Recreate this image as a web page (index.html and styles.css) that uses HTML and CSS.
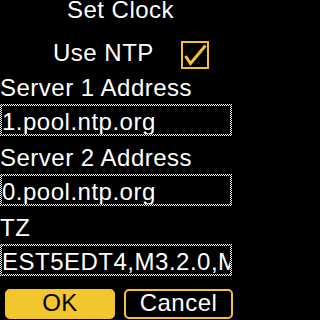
FILE: index.html
```html
<!DOCTYPE html>
<html>
<head>
<meta charset="utf-8">
<link rel="stylesheet" href="styles.css">
</head>
<body>
<div class="screen">
  <div class="title">Set Clock</div>
  <div class="ntp-row">
    <span class="ntp-label">Use NTP</span>
    <svg class="checkbox" width="28" height="28" viewBox="0 0 28 28">
      <rect x="1" y="1" width="26" height="26" fill="none" stroke="#f2c232" stroke-width="2"/>
      <polyline points="4.5,15 9.5,22.5 24.5,4.5" fill="none" stroke="#f2c232" stroke-width="3" stroke-linejoin="miter" stroke-linecap="butt"/>
    </svg>
  </div>
  <div class="group">
    <div class="label">Server 1 Address</div>
    <div class="field"><div class="field-text">1.pool.ntp.org</div></div>
  </div>
  <div class="group">
    <div class="label">Server 2 Address</div>
    <div class="field"><div class="field-text">0.pool.ntp.org</div></div>
  </div>
  <div class="group">
    <div class="label">TZ</div>
    <div class="field"><div class="field-text">EST5EDT4,M3.2.0,M11.1.0</div></div>
  </div>
  <div class="buttons">
    <div class="btn btn-ok">OK</div>
    <div class="btn btn-cancel">Cancel</div>
  </div>
</div>
</body>
</html>
```
FILE: styles.css
```css
html, body {
  margin: 0;
  padding: 0;
  background: #000;
}
body {
  width: 240px;
  height: 320px;
  overflow: hidden;
  font-family: "Liberation Sans", Arial, sans-serif;
  font-size: 24px;
  letter-spacing: 0.5px;
  color: #fff;
}
.screen {
  display: flex;
  flex-direction: column;
  width: 240px;
  height: 320px;
}
.title {
  height: 20px;
  line-height: 20px;
  text-align: center;
  padding-left: 1px;
}
.ntp-row {
  display: flex;
  align-items: flex-start;
  gap: 27px;
  margin-top: 21px;
  padding-left: 53px;
  height: 28px;
}
.ntp-label {
  line-height: 24px;
}
.checkbox {
  display: block;
  flex: none;
}
.group {
  display: flex;
  flex-direction: column;
  gap: 4px;
  margin-top: 7px;
}
.group + .group {
  margin-top: 10px;
}
.label {
  height: 24px;
  line-height: 24px;
  white-space: nowrap;
}
.field {
  width: 228px;
  padding: 2px;
  background:
    linear-gradient(90deg, #fff 1px, #000 1px) 0 0 / 2px 2px,
    linear-gradient(#fff 1px, #000 1px) 0 0 / 2px 2px;
  background-blend-mode: difference;
}
.field-text {
  height: 28px;
  line-height: 31px;
  background: #000;
  white-space: nowrap;
  overflow: hidden;
}
.buttons {
  display: flex;
  gap: 9px;
  margin-top: 13px;
  padding-left: 5px;
}
.btn {
  box-sizing: border-box;
  height: 30px;
  line-height: 23px;
  border: 2px solid #f2c232;
  border-radius: 5px;
  text-align: center;
}
.btn-ok {
  width: 110px;
  background: #f2c72e;
  color: #000;
}
.btn-cancel {
  width: 109px;
  background: #000;
  color: #fff;
}
```
